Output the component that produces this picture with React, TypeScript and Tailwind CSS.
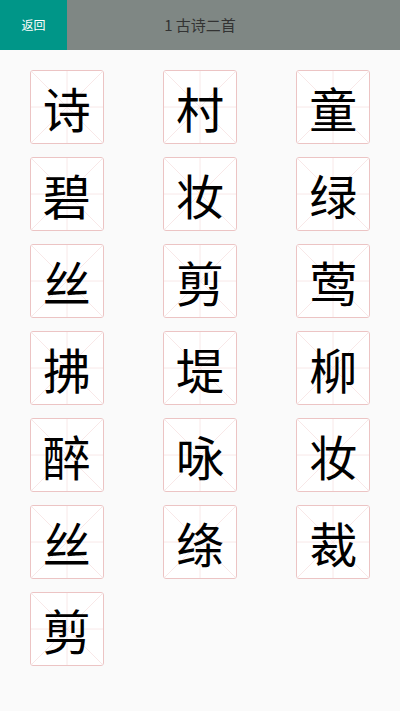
import React from 'react';

const chars = ['诗', '村', '童', '碧', '妆', '绿', '丝', '剪', '莺', '拂', '堤', '柳', '醉', '咏', '妆', '丝', '绦', '裁', '剪'];

// 田字格 / 米字格 guide lines
const GridBox: React.FC<{ ch: string }> = ({ ch }) => (
  <div className="relative w-[74px] h-[74px] border border-[#ecc4c4] rounded-[3px] bg-white">
    <svg className="absolute inset-0 w-full h-full" viewBox="0 0 72 72" preserveAspectRatio="none">
      <line x1="0" y1="0" x2="72" y2="72" stroke="#f6e2e2" strokeWidth="0.8" />
      <line x1="72" y1="0" x2="0" y2="72" stroke="#f6e2e2" strokeWidth="0.8" />
      <line x1="36" y1="0" x2="36" y2="72" stroke="#f6e2e2" strokeWidth="0.8" />
      <line x1="0" y1="36" x2="72" y2="36" stroke="#f6e2e2" strokeWidth="0.8" />
    </svg>
    <span className="relative flex items-center justify-center w-full h-full text-[48px] leading-none text-black font-['Noto_Sans_CJK_SC',sans-serif]">
      {ch}
    </span>
  </div>
);

export default function App() {
  return (
    <div className="w-[400px] min-h-[711px] bg-[#fafafa] font-['Noto_Sans_CJK_SC',sans-serif]">
      {/* Header */}
      <div className="grid grid-cols-[67px_1fr_67px] h-[50px] bg-[#7f8784]">
        <button className="flex items-center justify-center bg-[#009688] text-white text-[12px]">返回</button>
        <div className="flex items-center justify-center text-[#333] text-[15px]">1 古诗二首</div>
        <div />
      </div>

      {/* Characters */}
      <div className="grid grid-cols-3 gap-y-[13px] pt-[20px]">
        {chars.map((c, i) => (
          <div key={i} className="flex justify-center">
            <GridBox ch={c} />
          </div>
        ))}
      </div>
    </div>
  );
}
